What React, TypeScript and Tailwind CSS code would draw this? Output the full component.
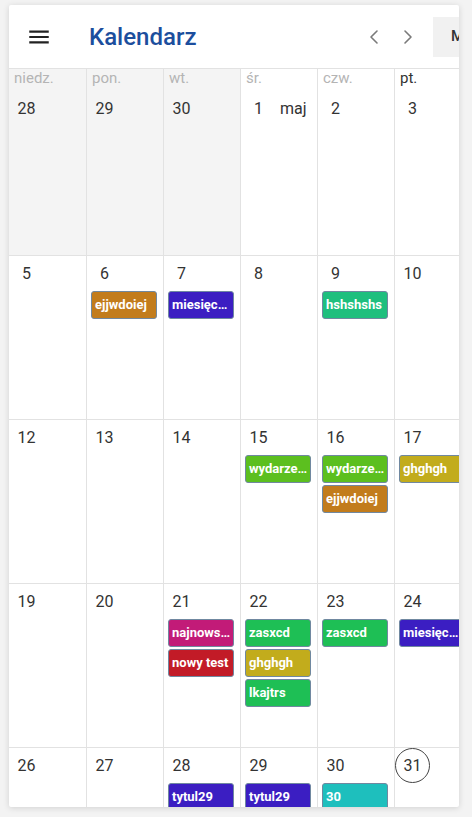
import { ChevronLeft, ChevronRight } from 'lucide-react';

interface CalEvent {
  title: string;
  color: string;
}

interface Day {
  num: number;
  otherMonth?: boolean;
  monthLabel?: string;
  today?: boolean;
  events?: CalEvent[];
}

const dayNames = ['niedz.', 'pon.', 'wt.', 'śr.', 'czw.', 'pt.', 'sob.'];

const ORANGE = 'bg-[#c27c1c]';
const INDIGO = 'bg-[#3b1ec2]';
const LIME = 'bg-[#5cbf1f]';
const MUSTARD = 'bg-[#c2ac1c]';
const GREEN = 'bg-[#1ebf55]';

const weeks: Day[][] = [
  [
    { num: 28, otherMonth: true },
    { num: 29, otherMonth: true },
    { num: 30, otherMonth: true },
    { num: 1, monthLabel: 'maj' },
    { num: 2 },
    { num: 3 },
    { num: 4 },
  ],
  [
    { num: 5 },
    { num: 6, events: [{ title: 'ejjwdoiej', color: ORANGE }] },
    { num: 7, events: [{ title: 'miesięczne spotkanie', color: INDIGO }] },
    { num: 8 },
    { num: 9, events: [{ title: 'hshshshs', color: 'bg-[#1ebf7e]' }] },
    { num: 10 },
    { num: 11 },
  ],
  [
    { num: 12 },
    { num: 13 },
    { num: 14 },
    { num: 15, events: [{ title: 'wydarzenie testowe', color: LIME }] },
    {
      num: 16,
      events: [
        { title: 'wydarzenie testowe', color: LIME },
        { title: 'ejjwdoiej', color: ORANGE },
      ],
    },
    { num: 17, events: [{ title: 'ghghgh', color: MUSTARD }] },
    { num: 18 },
  ],
  [
    { num: 19 },
    { num: 20 },
    {
      num: 21,
      events: [
        { title: 'najnowsze wydarzenie', color: 'bg-[#c21b78]' },
        { title: 'nowy test', color: 'bg-[#c21b27]' },
      ],
    },
    {
      num: 22,
      events: [
        { title: 'zasxcd', color: GREEN },
        { title: 'ghghgh', color: MUSTARD },
        { title: 'lkajtrs', color: GREEN },
      ],
    },
    { num: 23, events: [{ title: 'zasxcd', color: GREEN }] },
    { num: 24, events: [{ title: 'miesięczne spotkanie', color: INDIGO }] },
    { num: 25 },
  ],
  [
    { num: 26 },
    { num: 27 },
    { num: 28, events: [{ title: 'tytul29', color: INDIGO }] },
    { num: 29, events: [{ title: 'tytul29', color: INDIGO }] },
    { num: 30, events: [{ title: '30', color: 'bg-[#1ebfbd]' }] },
    { num: 31, today: true },
    { num: 1, otherMonth: true, monthLabel: 'cze' },
  ],
];

function MenuIcon() {
  return (
    <svg width="26" height="26" viewBox="0 0 24 24" fill="#222">
      <path d="M3 18h18v-2H3v2zm0-5h18v-2H3v2zm0-7v2h18V6H3z" />
    </svg>
  );
}

function EventChip({ ev }: { ev: CalEvent }) {
  return (
    <div
      className={`${ev.color} ml-[4px] mr-[6px] mb-[2px] h-[28px] rounded-[3px] border border-[#7088a0] pl-[3px] pr-[2px] text-[13px] font-bold leading-[26px] text-white truncate`}
    >
      {ev.title}
    </div>
  );
}

function DayCell({ day, col, first }: { day: Day; col: number; first: boolean }) {
  const todayWeekday = 5;
  return (
    <div
      className={`flex flex-col ${col > 0 ? 'border-l border-[#e2e2e2]' : ''} ${
        day.otherMonth && first ? 'bg-[#f4f4f4]' : ''
      }`}
    >
      {first && (
        <div
          className={`h-[22px] pl-[5px] text-[15px] leading-[18px] ${
            col === todayWeekday ? 'text-[#333]' : 'text-[#b4b4b4]'
          }`}
        >
          {dayNames[col]}
        </div>
      )}
      <div className="flex h-[35px] items-center">
        <div
          className={`flex h-[35px] w-[35px] items-center justify-center text-[16px] text-[#333] ${
            day.today ? 'rounded-full border border-[#444]' : ''
          }`}
        >
          {day.num}
        </div>
        {day.monthLabel && !day.otherMonth && (
          <span className="ml-[4px] text-[16px] text-[#333]">{day.monthLabel}</span>
        )}
      </div>
      {day.events?.map((ev, i) => (
        <EventChip key={i} ev={ev} />
      ))}
    </div>
  );
}

export default function App() {
  return (
    <div
      className="min-h-screen bg-[#f3f3f3] pt-[5px]"
      style={{ fontFamily: 'Roboto, "Noto Sans", sans-serif' }}
    >
      <div className="ml-[9px] h-[802px] w-[450px] overflow-hidden rounded-[2px] bg-white shadow-[0_1px_6px_rgba(0,0,0,0.14)]">
        <div className="w-[539px]">
          {/* Header */}
          <div className="flex h-[64px] items-center border-b border-[#e2e2e2]">
            <div className="ml-[17px]">
              <MenuIcon />
            </div>
            <h1 className="ml-[37px] text-[24px] font-medium text-[#1c4e9d]">Kalendarz</h1>
            <div className="ml-auto mr-[13px] flex items-center gap-[10px] text-[#7a7a7a]">
              <ChevronLeft size={24} strokeWidth={1.6} />
              <ChevronRight size={24} strokeWidth={1.6} />
            </div>
            <button className="mr-[15px] h-[40px] w-[100px] bg-[#f1f1f1] pl-[18px] text-left text-[15px] font-medium text-[#333]">
              Miesiąc
            </button>
          </div>

          {/* Month grid */}
          {weeks.map((week, w) => (
            <div
              key={w}
              className={`grid grid-cols-7 ${
                w === 0 ? 'h-[186px]' : 'h-[164px] border-t border-[#e2e2e2]'
              }`}
            >
              {week.map((day, c) => (
                <DayCell key={c} day={day} col={c} first={w === 0} />
              ))}
            </div>
          ))}
        </div>
      </div>
    </div>
  );
}
